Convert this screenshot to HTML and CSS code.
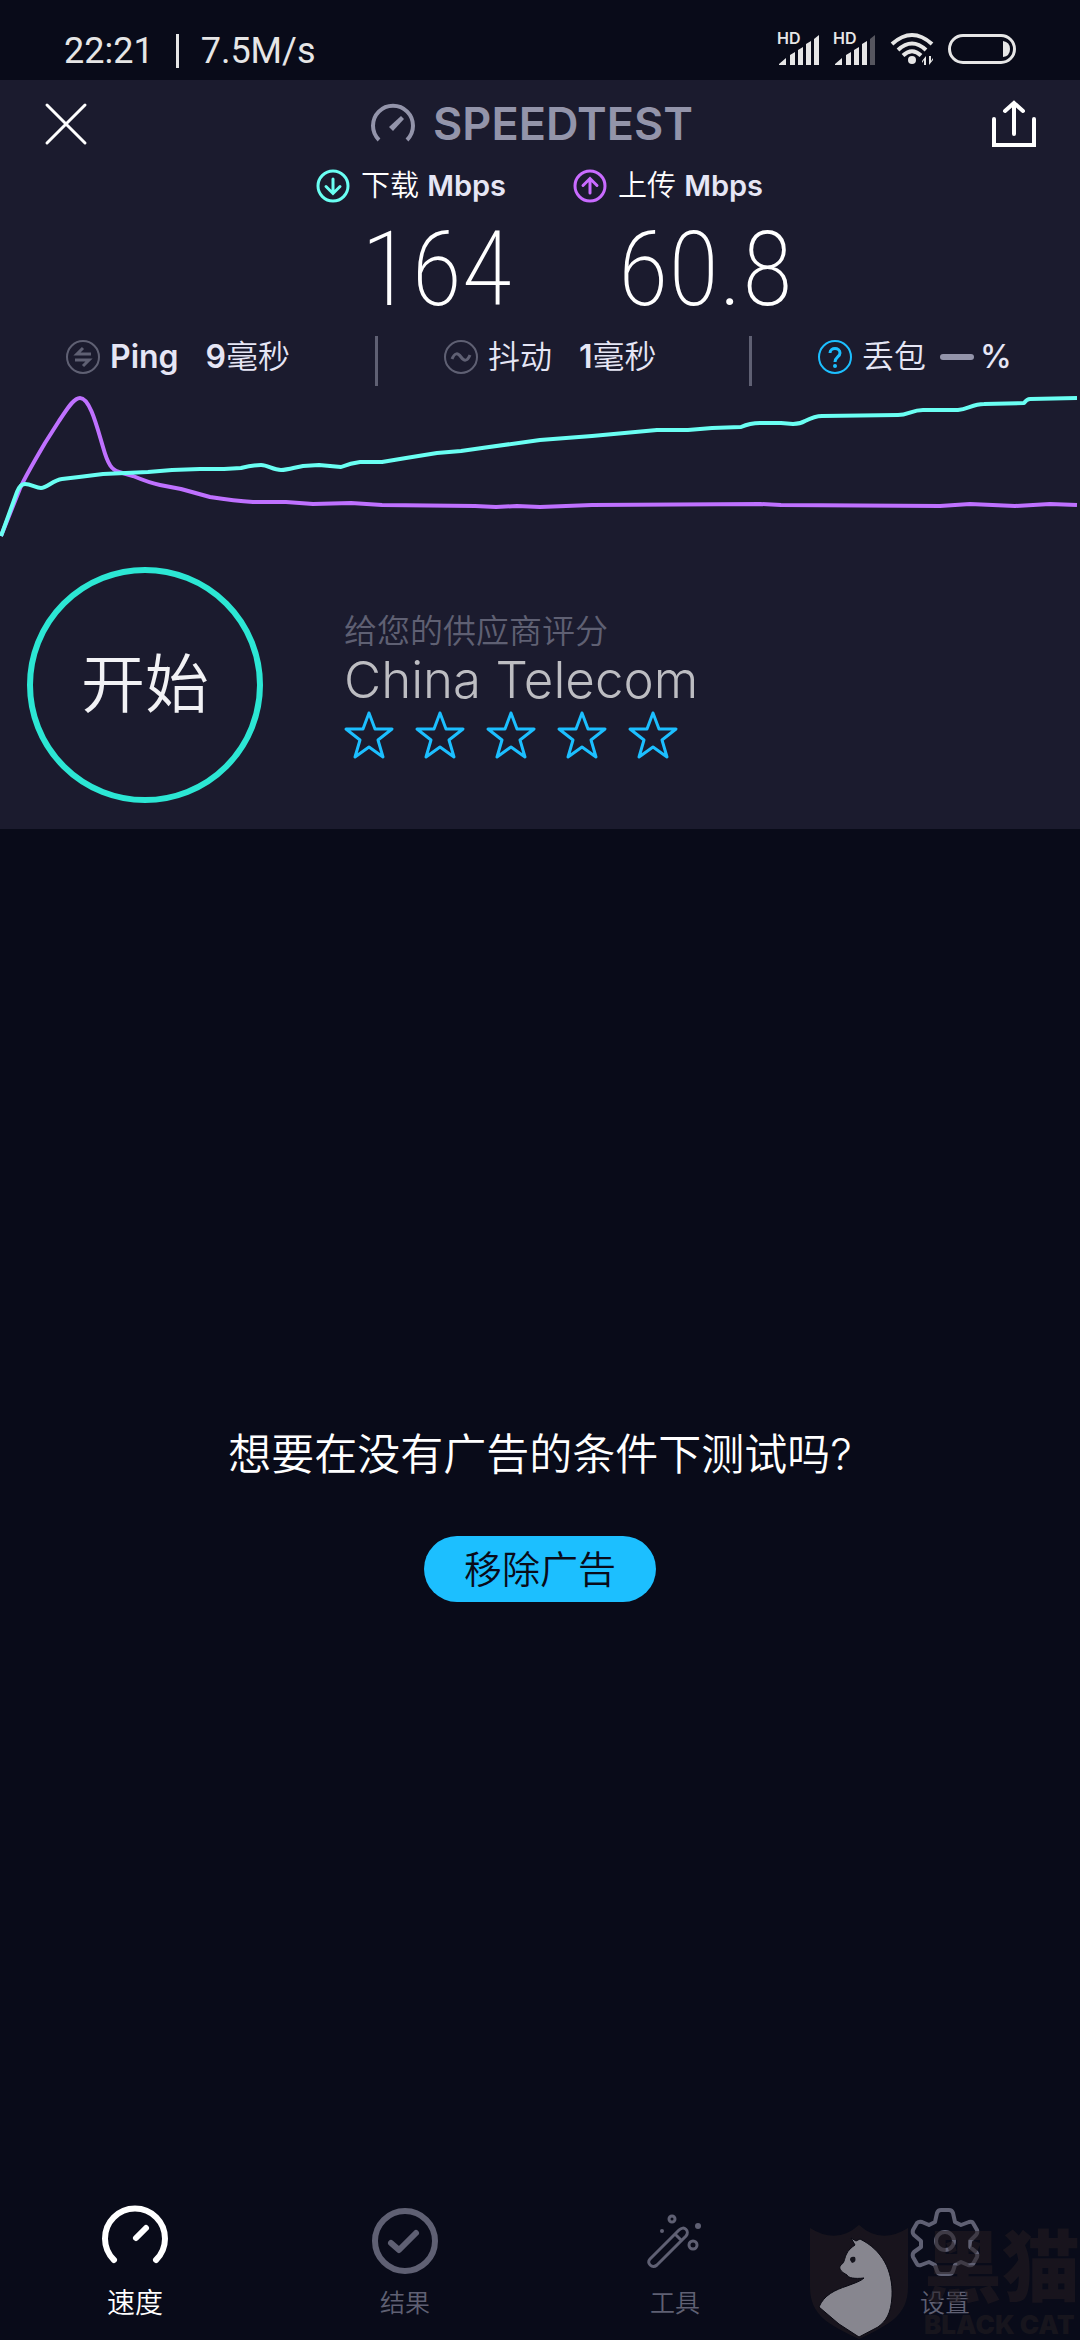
FILE: index.html
```html
<!DOCTYPE html>
<html lang="zh-CN">
<head>
<meta charset="utf-8">
<meta name="viewport" content="width=device-width">
<title>Speedtest</title>
<link rel="stylesheet" href="styles.css">
</head>
<body>
<div class="app">
  <div class="status">
    <span class="status-text"><span>22:21</span><span class="status-bar"></span><span>7.5M/s</span></span>
    <span class="status-icons">
      <svg class="signal" viewBox="0 0 42 34" width="42" height="34" aria-hidden="true"><text x="-1" y="12" class="hd">HD</text><path d="M1 33v-1l7-6v7zM12 33V23l5-3v13zM20 33V18l5-3v18zM28 33V12l5-3v24zM36 33V7l5-4v30z"/></svg>
      <svg class="signal" viewBox="0 0 42 34" width="42" height="34" aria-hidden="true"><text x="-1" y="12" class="hd">HD</text><path d="M1 33v-1l7-6v7zM12 33V23l5-3v13zM20 33V18l5-3v18zM28 33V12l5-3v24z"/><path class="dim" d="M36 33V7l5-4v30z"/></svg>
      <svg class="wifi" viewBox="0 0 44 34" width="44" height="34" aria-hidden="true"><g fill="none" stroke="#e6e6e6" stroke-width="4"><path d="M2 12Q22-6 42 12"/><path d="M8 18Q22 5 36 18"/><path d="M13 23.500Q22 15 31 23.500"/></g><circle cx="22" cy="28" r="4"/><path d="M36 24v9h-2v-5l-2 3v-2zM39 33v-9h2v5l2-3v2z"/></svg>
      <svg class="battery" viewBox="0 0 68 30" width="68" height="30" aria-hidden="true"><rect x="1.500" y="1.500" width="65" height="27" rx="13.500" fill="none" stroke="#e6e6e6" stroke-width="3"/><path d="M55 7q7 1 7 8t-7 8z"/></svg>
    </span>
  </div>

  <section class="panel">
    <header class="top">
      <button class="icon-button" aria-label="关闭"><svg viewBox="0 0 44 44" width="44" height="44"><path d="M3 3l38 38M41 3L3 41" fill="none" stroke="#fff" stroke-width="3" stroke-linecap="round"/></svg></button>
      <h1 class="brand"><svg viewBox="0 0 44 38" width="44" height="38" aria-hidden="true"><path d="M8 35A20 20 0 1 1 36 35" fill="none" stroke="#9394aa" stroke-width="4"/><path d="M18 22L30 11l3 3-11 12z" fill="#9394aa"/></svg><span>SPEEDTEST</span></h1>
      <button class="icon-button" aria-label="分享"><svg viewBox="0 0 44 46" width="44" height="46"><path d="M2 18v26h40V18M22 33V3M13 10l9-8 9 8" fill="none" stroke="#fff" stroke-width="4" stroke-linecap="round"/></svg></button>
    </header>

    <div class="speeds">
      <div class="speed">
        <svg viewBox="0 0 34 34" width="34" height="34" aria-hidden="true"><g fill="none" stroke="#6afff3" stroke-width="3" stroke-linecap="round"><circle cx="17" cy="17" r="15"/><path d="M17 10v14M10 17.500l7 7 7-7"/></g></svg>
        <span class="speed-label">下载 <b>Mbps</b></span>
        <span class="speed-value">164</span>
      </div>
      <div class="speed">
        <svg viewBox="0 0 34 34" width="34" height="34" aria-hidden="true"><g fill="none" stroke="#c96bff" stroke-width="3" stroke-linecap="round"><circle cx="17" cy="17" r="15"/><path d="M17 24V10M10 16.500l7-7 7 7"/></g></svg>
        <span class="speed-label">上传 <b>Mbps</b></span>
        <span class="speed-value">60.8</span>
      </div>
    </div>

    <div class="stats">
      <div class="stat">
        <svg viewBox="0 0 34 34" width="34" height="34" aria-hidden="true"><g fill="none" stroke="#5f6073" stroke-width="2"><circle cx="17" cy="17" r="16"/><path d="M25 14H11l6-6M9 20h14l-6 6" stroke-width="3"/></g></svg>
        <b>Ping</b><span class="stat-value"><b>9</b>毫秒</span>
      </div>
      <div class="stat">
        <svg viewBox="0 0 34 34" width="34" height="34" aria-hidden="true"><g fill="none" stroke="#5f6073" stroke-width="2"><circle cx="17" cy="17" r="16"/><path d="M8 19c3-7 6-6 9-2s6 5 9-2" stroke-width="3"/></g></svg>
        <span>抖动</span><span class="stat-value"><b>1</b>毫秒</span>
      </div>
      <div class="stat">
        <svg viewBox="0 0 34 34" width="34" height="34" aria-hidden="true"><g fill="none" stroke="#1cbfff" stroke-width="2"><circle cx="17" cy="17" r="16"/><path d="M12 13c0-6 10-6 10 0 0 4-5 4-5 9" stroke-width="3"/></g><circle cx="17" cy="26" r="2" fill="#1cbfff"/></svg>
        <span>丢包</span><span class="loss"><i class="dash"></i><span class="percent">%</span></span>
      </div>
    </div>

    <svg class="chart" viewBox="0 0 1080 145" aria-hidden="true">
      <path stroke="#bf71ff" d="M1 141L19 96Q22 87 45 48L59 26C66 16 73 3 80 3C90 3 97 32 103 52C108 70 112 75 119 77L133 81Q150 88 160 90L181 94L210 102Q235 106 253 107L286 107L313 109L351 108L382 110L475 111L496 112L517 111L540 112L592 110L760 109L781 110L940 111L970 109L1015 111L1050 109L1077 110"/>
      <path stroke="#6afff3" d="M1 141L17 97Q20 89 25 89C31 89 36 93 41 93C47 93 53 85 62 84L79 82L103 79L148 77L172 75L200 74L224 74L241 73Q252 70 261 70C268 70 273 75 281 75C288 75 296 72 303 71L319 70L341 72Q351 68 360 67L382 67L406 63L437 58L461 56L482 53L540 45L592 41L657 35L688 35L712 33L741 32Q750 28 760 28L781 28L793 29Q800 29 805 26Q815 21 822 21L898 20C908 20 912 15 923 15L958 15C968 14 973 9 984 9L1024 8Q1027 4 1030 4L1077 3"/>
    </svg>

    <div class="actions">
      <button class="start">开始</button>
      <div class="rating">
        <span class="rating-label">给您的供应商评分</span>
        <span class="provider">China Telecom</span>
        <div class="stars">
          <button class="star" aria-label="1 星"><svg viewBox="0 0 50 48" width="50" height="48"><path d="M25 2l-6 16H2l14 11-5 17 14-10 14 10-5-17 14-11H31z"/></svg></button>
          <button class="star" aria-label="2 星"><svg viewBox="0 0 50 48" width="50" height="48"><path d="M25 2l-6 16H2l14 11-5 17 14-10 14 10-5-17 14-11H31z"/></svg></button>
          <button class="star" aria-label="3 星"><svg viewBox="0 0 50 48" width="50" height="48"><path d="M25 2l-6 16H2l14 11-5 17 14-10 14 10-5-17 14-11H31z"/></svg></button>
          <button class="star" aria-label="4 星"><svg viewBox="0 0 50 48" width="50" height="48"><path d="M25 2l-6 16H2l14 11-5 17 14-10 14 10-5-17 14-11H31z"/></svg></button>
          <button class="star" aria-label="5 星"><svg viewBox="0 0 50 48" width="50" height="48"><path d="M25 2l-6 16H2l14 11-5 17 14-10 14 10-5-17 14-11H31z"/></svg></button>
        </div>
      </div>
    </div>
  </section>

  <main class="promo">
    <p class="promo-text">想要在没有广告的条件下测试吗?</p>
    <button class="promo-button">移除广告</button>
  </main>

  <nav class="tabs">
    <a class="tab active" href="#speed"><svg viewBox="0 0 68 68" width="68" height="68" aria-hidden="true"><path d="M13 53A30 30 0 1 1 55 53M35 31L45 21" fill="none" stroke="currentColor" stroke-width="6" stroke-linecap="round"/></svg><span>速度</span></a>
    <a class="tab" href="#results"><svg viewBox="0 0 68 68" width="68" height="68" aria-hidden="true"><g fill="none" stroke="currentColor" stroke-width="6" stroke-linecap="round" stroke-linejoin="round"><circle cx="34" cy="34" r="30"/><path d="M20 36l8 7 17-17"/></g></svg><span>结果</span></a>
    <a class="tab" href="#tools"><svg viewBox="0 0 68 68" width="68" height="68" aria-hidden="true"><g fill="none" stroke="currentColor" stroke-width="3"><path d="M9 52L38 23c5-5 11 1 7 6L16 58c-5 4-11-2-7-6zM34 27l6 6"/><circle cx="31" cy="12" r="3"/><circle cx="52" cy="38" r="4"/></g><circle cx="57" cy="19" r="3" fill="currentColor"/><circle cx="21" cy="24" r="2" fill="currentColor"/></svg><span>工具</span></a>
    <a class="tab" href="#settings"><svg viewBox="0 0 68 68" width="68" height="68" aria-hidden="true"><g fill="none" stroke="currentColor" stroke-width="4" stroke-linejoin="round"><path d="M30 3h8q3 0 4 3l2 9 6 3 8-3q3-1 4 1l4 7q1 3-1 5l-6 6v6l6 5q2 2 1 5l-4 7q-2 2-5 1l-7-3-6 3-2 6q-1 3-4 3h-8q-3 0-4-3l-2-6-6-3-8 3q-3 1-4-1l-4-7q-1-3 1-5l7-5v-6l-7-6q-2-2-1-5l4-7q2-2 5-1l7 3 6-3 2-9q1-3 4-3z"/><circle cx="34" cy="34" r="9"/></g></svg><span>设置</span></a>
  </nav>

  <div class="watermark" aria-hidden="true">
    <svg viewBox="0 0 98 114" width="98" height="114"><path fill="#241e21" fill-opacity=".55" d="M0 3Q27 20 49 0Q71 20 98 3V62C98 91 78 100 49 114C20 100 0 91 0 62z"/><path fill="#87868f" stroke="#090912" d="M41 13l5 3 4-2C72 25 83 45 82 71C81 89 76 96 68 102L49 112L29 99L9 82C14 70 25 65 37 61C45 58 51 56 54 53C45 54 38 53 37 50C32 47 29 45 30 41C35 37 34 35 36 30C38 25 42 22 45 20z"/><path fill="#15141d" d="M40 35q0-4 5-3 2 5-3 6z"/></svg>
    <span class="watermark-words"><span class="watermark-cn">黑猫</span><span class="watermark-en">BLACK CAT</span></span>
  </div>
</div>
</body>
</html>
```
FILE: styles.css
```css
* { box-sizing: border-box; }

body {
  margin: 0;
  background: #090b19;
  color: #fff;
  font-family: Inter, "Noto Sans CJK SC", sans-serif;
  font-weight: 350;
}

button {
  margin: 0;
  padding: 0;
  border: 0;
  background: none;
  color: inherit;
  font: inherit;
}

svg { display: block; flex: none; overflow: visible; }
b { font-weight: 600; }

.app {
  position: relative;
  display: flex;
  flex-direction: column;
  min-height: 100vh;
  overflow: hidden;
}

/* Phone status bar */
.status {
  display: flex;
  justify-content: space-between;
  padding: 28px 64px 6px;
  height: 80px;
  color: #e6e6e6;
}
.status-text {
  display: flex;
  align-items: center;
  gap: 22px;
  font: 400 36px/44px Roboto, sans-serif;
}
.status-bar { width: 3px; height: 34px; background: #e6e6e6; }
.status-icons {
  display: flex;
  align-items: center;
  gap: 14px;
  height: 42px;
  fill: #e6e6e6;
}
.hd { font: 600 16px Inter, sans-serif; }
.dim { fill: #56565f; }

/* Result panel */
.panel { background: #1b1b2e; padding-bottom: 26px; }
.top {
  display: flex;
  align-items: center;
  justify-content: space-between;
  height: 88px;
  padding: 0 44px;
}
.brand {
  display: flex;
  align-items: center;
  gap: 18px;
  margin: 0 16px 0 0;
  color: #9394aa;
  font-size: 45px;
  font-weight: 600;
  line-height: 44px;
}

.speeds {
  display: flex;
  justify-content: center;
  gap: 66px;
}
.speed {
  display: grid;
  grid-template-columns: 34px 146px;
  column-gap: 11px;
  align-items: center;
}
.speed-label { font-size: 29px; line-height: 36px; white-space: nowrap; }
.speed-label b { color: #e6e6f5; }
.speed-value {
  grid-column: 2;
  font: 200 104px/132px "Roboto Condensed", Roboto, sans-serif;
}

.stats {
  display: grid;
  grid-template-columns: 378fr 374fr 328fr;
  color: #e6e6f5;
  font-size: 32px;
  line-height: 40px;
}
.stat {
  display: flex;
  align-items: center;
  gap: 10px;
  height: 50px;
  padding: 0 0 8px 66px;
  border-right: 3px solid #5f6073;
  white-space: nowrap;
}
.stat:last-child { border-right: 0; }
.stat-value { margin-left: 17px; }
.loss { display: flex; align-items: center; gap: 6px; margin-left: 4px; }
.dash { width: 34px; height: 6px; border-radius: 3px; background: #9394aa; }
.percent { font-weight: 500; }

.chart {
  width: 100%;
  margin-top: 9px;
  fill: none;
  stroke-width: 4;
  stroke-linejoin: round;
}

.actions {
  display: flex;
  align-items: center;
  gap: 81px;
  padding: 27px 27px 0;
}
.start {
  width: 236px;
  height: 236px;
  padding-bottom: 12px;
  border: 6px solid #2ce7d4;
  border-radius: 50%;
  color: #f2f2f5;
  font-size: 64px;
}
.rating { display: flex; flex-direction: column; }
.rating-label { color: #5f6073; font-size: 33px; line-height: 40px; }
.provider {
  padding-bottom: 2px;
  color: #bdbdc2;
  font-size: 51px;
  font-weight: 300;
  line-height: 58px;
}
.stars { display: flex; gap: 21px; }
.star svg { fill: none; stroke: #1cbfff; stroke-width: 3; stroke-linejoin: round; }

/* Ad-free prompt */
.promo {
  flex: 1;
  display: flex;
  flex-direction: column;
  align-items: center;
  justify-content: center;
  gap: 50px;
  padding-bottom: 12px;
}
.promo-text { margin: 0; font-size: 43px; line-height: 64px; }
.promo-button {
  padding: 0 40px;
  border-radius: 33px;
  background: #1cbfff;
  color: #090b19;
  font-size: 38px;
  line-height: 66px;
}

/* Bottom navigation */
.tabs { display: grid; grid-template-columns: repeat(4, 1fr); }
.tab {
  display: flex;
  flex-direction: column;
  align-items: center;
  gap: 8px;
  padding-bottom: 17px;
  color: #5f6073;
  font-size: 25px;
  line-height: 40px;
  text-decoration: none;
}
.tab.active { color: #fff; font-size: 28px; }

/* Watermark laid over the navigation */
.watermark {
  position: absolute;
  right: 0;
  bottom: 1px;
  display: flex;
  gap: 16px;
  pointer-events: none;
}
.watermark-words {
  display: flex;
  flex-direction: column;
  color: rgba(36, 30, 33, 0.55);
  font-weight: 900;
  white-space: nowrap;
}
.watermark-cn { font-size: 78px; line-height: 86px; }
.watermark-en { font-size: 26px; line-height: 28px; }
```
